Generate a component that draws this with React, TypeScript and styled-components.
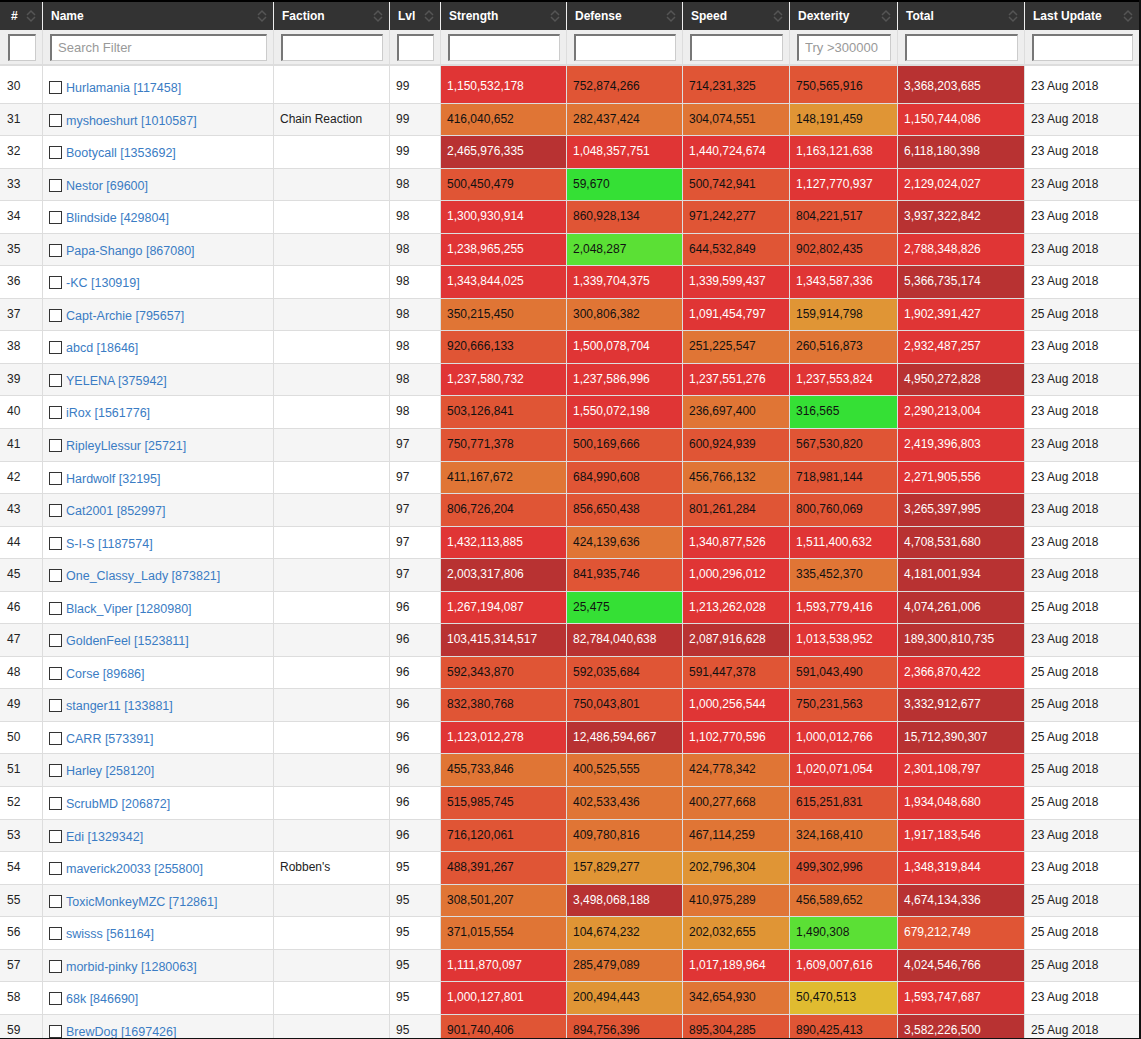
import React from "react";
import styled, { createGlobalStyle } from "styled-components";

const G = createGlobalStyle`
  html, body { margin: 0; padding: 0; background: #111; }
  body { font-family: Arial, "Liberation Sans", sans-serif; overflow: hidden; }
`;

const cols = "42px 231px 116px 51px 126px 116px 107px 108px 127px 1fr";

const Wrap = styled.div`
  width: 1139px; height: 1036px; overflow: hidden; background: #fff;
  border-top: 2px solid #000;
`;
const HeadRow = styled.div`
  display: grid; grid-template-columns: ${cols}; background: #333; height: 28px;
`;
const HeadCell = styled.div`
  color: #fff; font-weight: bold; font-size: 12px; display: flex; align-items: center;
  justify-content: space-between; padding: 0 6px 0 ${p => p.$pl || 8}px;
  border-left: 1px solid ${p => (p.$first ? "transparent" : "#eee")};
`;
const FilterRow = styled.div`
  display: grid; grid-template-columns: ${cols}; background: #eee; height: 34px;
  border-bottom: 2px solid #ddd;
`;
const FilterCell = styled.div`
  display: flex; align-items: center; padding: 0 6px 0 7px;
  border-left: 1px solid ${p => (p.$first ? "transparent" : "#ddd")};
`;
const Input = styled.input`
  width: 100%; height: 27px; box-sizing: border-box; border: 1px solid #ccc;
  border-top: 2px solid #777; border-left: 2px solid #777; background: #fff;
  font-family: Arial, "Liberation Sans", sans-serif; font-size: 13px; padding: 0 6px; color: #333;
  &::placeholder { color: #999; }
`;
const Row = styled.div`
  display: grid; grid-template-columns: ${cols}; height: ${p => p.$h}px;
  background: ${p => (p.$alt ? "#f5f5f5" : "#fff")}; border-bottom: 1px solid #ddd; box-sizing: border-box;
`;
const Cell = styled.div`
  font-size: 12px; color: ${p => p.$fg || "#222"}; background: ${p => p.$bg || "transparent"};
  padding: ${p => p.$pt}px 6px 0 6px; border-left: 1px solid ${p => (p.$first ? "transparent" : "#ddd")};
  display: flex; align-items: center; box-sizing: border-box; white-space: nowrap;
  align-items: flex-start; padding-top: ${p => p.$pt}px;
`;
const Box = styled.span`
  width: 11px; height: 11px; border: 1px solid #333; display: inline-block; margin-right: 4px; background: #fff;
`;
const Link = styled.span` color: #3a7cc4; font-size: 12.5px; `;

const Sort = () => (
  <svg width="10" height="14" viewBox="0 0 10 14">
    <path d="M1 6 L5 2 L9 6 M1 8 L5 12 L9 8" fill="none" stroke="#555" strokeWidth="1.5" />
  </svg>
);

const data: [number, string, string, number, number, number, number, number, number, string][] = [
  [30,"Hurlamania [117458]","",99,1150532178,752874266,714231325,750565916,3368203685,"23"],
  [31,"myshoeshurt [1010587]","Chain Reaction",99,416040652,282437424,304074551,148191459,1150744086,"23"],
  [32,"Bootycall [1353692]","",99,2465976335,1048357751,1440724674,1163121638,6118180398,"23"],
  [33,"Nestor [69600]","",98,500450479,59670,500742941,1127770937,2129024027,"23"],
  [34,"Blindside [429804]","",98,1300930914,860928134,971242277,804221517,3937322842,"23"],
  [35,"Papa-Shango [867080]","",98,1238965255,2048287,644532849,902802435,2788348826,"23"],
  [36,"-KC [130919]","",98,1343844025,1339704375,1339599437,1343587336,5366735174,"23"],
  [37,"Capt-Archie [795657]","",98,350215450,300806382,1091454797,159914798,1902391427,"25"],
  [38,"abcd [18646]","",98,920666133,1500078704,251225547,260516873,2932487257,"23"],
  [39,"YELENA [375942]","",98,1237580732,1237586996,1237551276,1237553824,4950272828,"23"],
  [40,"iRox [1561776]","",98,503126841,1550072198,236697400,316565,2290213004,"23"],
  [41,"RipleyLlessur [25721]","",97,750771378,500169666,600924939,567530820,2419396803,"23"],
  [42,"Hardwolf [32195]","",97,411167672,684990608,456766132,718981144,2271905556,"23"],
  [43,"Cat2001 [852997]","",97,806726204,856650438,801261284,800760069,3265397995,"23"],
  [44,"S-I-S [1187574]","",97,1432113885,424139636,1340877526,1511400632,4708531680,"23"],
  [45,"One_Classy_Lady [873821]","",97,2003317806,841935746,1000296012,335452370,4181001934,"23"],
  [46,"Black_Viper [1280980]","",96,1267194087,25475,1213262028,1593779416,4074261006,"25"],
  [47,"GoldenFeel [1523811]","",96,103415314517,82784040638,2087916628,1013538952,189300810735,"23"],
  [48,"Corse [89686]","",96,592343870,592035684,591447378,591043490,2366870422,"25"],
  [49,"stanger11 [133881]","",96,832380768,750043801,1000256544,750231563,3332912677,"25"],
  [50,"CARR [573391]","",96,1123012278,12486594667,1102770596,1000012766,15712390307,"25"],
  [51,"Harley [258120]","",96,455733846,400525555,424778342,1020071054,2301108797,"25"],
  [52,"ScrubMD [206872]","",96,515985745,402533436,400277668,615251831,1934048680,"25"],
  [53,"Edi [1329342]","",96,716120061,409780816,467114259,324168410,1917183546,"23"],
  [54,"maverick20033 [255800]","Robben's",95,488391267,157829277,202796304,499302996,1348319844,"23"],
  [55,"ToxicMonkeyMZC [712861]","",95,308501207,3498068188,410975289,456589652,4674134336,"25"],
  [56,"swisss [561164]","",95,371015554,104674232,202032655,1490308,679212749,"25"],
  [57,"morbid-pinky [1280063]","",95,1111870097,285479089,1017189964,1609007616,4024546766,"25"],
  [58,"68k [846690]","",95,1000127801,200494443,342654930,50470513,1593747687,"23"],
  [59,"BrewDog [1697426]","",95,901740406,894756396,895304285,890425413,3582226500,"25"],
];

function color(v: number, total = false): [string, string] {
  if (total) {
    if (v >= 3e9) return ["#b83232", "#fff"];
    if (v >= 1e9) return ["#e03535", "#fff"];
    return ["#e05535", "#fff"];
  }
  if (v >= 2e9) return ["#b83232", "#fff"];
  if (v >= 1e9) return ["#e03535", "#fff"];
  if (v >= 480e6) return ["#e05535", "#111"];
  if (v >= 230e6) return ["#e07535", "#111"];
  if (v >= 1e8) return ["#e09535", "#111"];
  if (v >= 1e7) return ["#e0bb30", "#111"];
  if (v >= 1e6) return ["#5be035", "#111"];
  return ["#35e035", "#111"];
}
const fmt = (n: number) => n.toLocaleString("en-US");

const heads = ["#", "Name", "Faction", "Lvl", "Strength", "Defense", "Speed", "Dexterity", "Total", "Last Update"];

export default function App() {
  return (
    <Wrap>
      <G />
      <HeadRow>
        {heads.map((h, i) => (
          <HeadCell key={h} $first={i === 0} $pl={i === 0 ? 10 : 8}>
            <span>{h}</span><Sort />
          </HeadCell>
        ))}
      </HeadRow>
      <FilterRow>
        {heads.map((h, i) => (
          <FilterCell key={h} $first={i === 0}>
            <Input placeholder={i === 1 ? "Search Filter" : i === 7 ? "Try >300000" : ""} />
          </FilterCell>
        ))}
      </FilterRow>
      {data.map((r, idx) => {
        const first = idx === 0;
        const h = first ? 37.5 : 32.55;
        const pt = first ? 13 : 8;
        const stats = [r[4], r[5], r[6], r[7]];
        return (
          <Row key={r[0]} $alt={idx % 2 === 1} $h={h}>
            <Cell $first $pt={pt}>{r[0]}</Cell>
            <Cell $pt={pt + 2}><Box /><Link>{r[1]}</Link></Cell>
            <Cell $pt={pt}>{r[2]}</Cell>
            <Cell $pt={pt}>{r[3]}</Cell>
            {stats.map((v, i) => {
              const [bg, fg] = color(v);
              return <Cell key={i} $pt={pt} $bg={bg} $fg={fg}>{fmt(v)}</Cell>;
            })}
            {(() => { const [bg, fg] = color(r[8], true); return <Cell $pt={pt} $bg={bg} $fg={fg}>{fmt(r[8])}</Cell>; })()}
            <Cell $pt={pt}>{r[9]} Aug 2018</Cell>
          </Row>
        );
      })}
    </Wrap>
  );
}
